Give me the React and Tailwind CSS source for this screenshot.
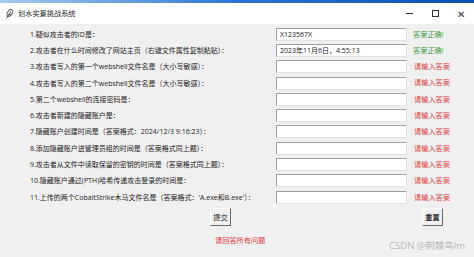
import { Feather } from 'lucide-react';

const questions = [
  '1.疑似攻击者的ID是：',
  '2.攻击者在什么时间修改了网站主页（右键文件属性复制粘贴）：',
  '3.攻击者写入的第一个webshell文件名是（大小写敏感）：',
  '4.攻击者写入的第二个webshell文件名是（大小写敏感）：',
  '5.第二个webshell的连接密码是：',
  '6.攻击者新建的隐藏账户是：',
  '7.隐藏账户创建时间是（答案格式：2024/12/3 9:16:23）：',
  '8.添加隐藏账户进管理员组的时间是（答案格式同上题）：',
  '9.攻击者从文件中读取保留的密钥的时间是（答案格式同上题）：',
  '10.隐藏账户通过(PTH)哈希传递攻击登录的时间是：',
  "11.上传的两个CobaltStrike木马文件名是（答案格式：'A.exe和B.exe'）：",
];

const answers = ['X123567X', '2023年11月6日，4:55:13'];

const font = { fontFamily: '"Open Sans", "Noto Sans CJK SC", sans-serif' };

export default function App() {
  return (
    <div className="w-[474px] h-[257px] overflow-hidden bg-[#f0f0f0] flex flex-col text-[#222]" style={font}>
      {/* window frame top edge */}
      <div className="h-[3px] bg-gradient-to-r from-[#a9cbee] via-[#2a74d0] to-[#0b4fb0]" />

      {/* title bar */}
      <div className="h-[21px] bg-white flex items-center pl-[5px]">
        <Feather size={9} strokeWidth={2.5} className="text-[#555] -rotate-12" />
        <span className="ml-[4px] text-[7.2px] leading-none">划水实景挑战系统</span>
        <div className="ml-auto flex items-center h-full">
          <div className="w-[26px] flex justify-center">
            <div className="w-[7px] h-px bg-[#333]" />
          </div>
          <div className="w-[26px] flex justify-center">
            <div className="w-[7px] h-[7px] border border-[#333]" />
          </div>
          <div className="w-[26px] flex justify-center text-[10px] leading-none text-[#333]">✕</div>
        </div>
      </div>

      {/* form rows */}
      <div className="flex flex-col pt-[2px]">
        {questions.map((q, i) => (
          <div key={i} className="h-[16.3px] flex items-center">
            <div className="w-[276px] pl-[30px] text-[7px] leading-none whitespace-nowrap">{q}</div>
            <div className="w-[131px] h-[13px] bg-white border border-t-[#a0a0a0] border-l-[#a0a0a0] border-b-[#e3e3e3] border-r-[#e3e3e3] flex items-center pl-[3px] text-[7px] leading-none">
              {answers[i] || ''}
            </div>
            {answers[i] ? (
              <span className="ml-[6px] text-[7.2px] leading-none text-[#3a9a3a]">答案正确!</span>
            ) : (
              <span className="ml-[7px] text-[7.2px] leading-none text-[#e03a3a]">请输入答案</span>
            )}
          </div>
        ))}
      </div>

      {/* buttons */}
      <div className="flex mt-[3px] h-[18px]">
        <button className="ml-[210px] w-[21px] h-[18px] bg-[#f0f0f0] border border-t-white border-l-white border-b-[#696969] border-r-[#696969] text-[7.2px] leading-none flex items-center justify-center">
          提交
        </button>
        <button className="ml-[191px] w-[21px] h-[18px] bg-[#f0f0f0] border border-t-white border-l-white border-b-[#696969] border-r-[#696969] text-[7.2px] leading-none font-bold flex items-center justify-center">
          重置
        </button>
      </div>

      {/* result + watermark */}
      <div className="flex items-start mt-[11px]">
        <span className="ml-[215px] text-[7.2px] leading-none text-[#e03a3a]">请回答所有问题</span>
        <span className="ml-auto mr-[9px] mt-[4px] text-[9.5px] leading-none text-[#b8b8b8]">CSDN @荆棘鸟lm</span>
      </div>
    </div>
  );
}
